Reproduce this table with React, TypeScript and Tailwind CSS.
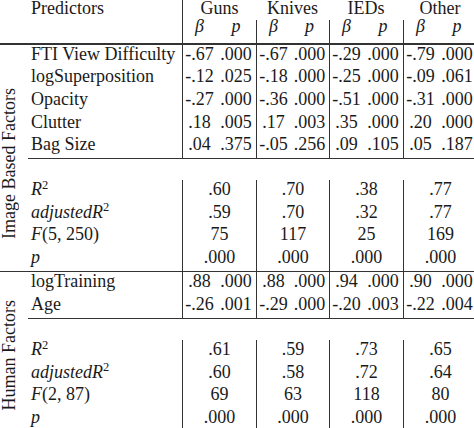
import React from 'react';

type Pair = [string, string];

const LINE = 'bg-[#333]';

function Rule() {
  return <div className={`h-[1.5px] ${LINE}`} />;
}

function DataRow({ label, vals }: { label: React.ReactNode; vals: Pair[] }) {
  return (
    <div className="flex h-[22.7px] leading-[18.4px]">
      <div className="w-[154px] shrink-0 whitespace-nowrap pl-[3px]">{label}</div>
      {vals.map(([b, p], i) => (
        <div key={i} className={`flex shrink-0 border-l-[1.5px] border-[#333] ${i === 1 ? 'w-[73px]' : 'w-[74px]'}`}>
          <span className="w-[33px] text-center whitespace-nowrap">{b}</span>
          <span className="flex-1 text-center whitespace-nowrap">{p}</span>
        </div>
      ))}
    </div>
  );
}

function StatRow({ label, vals }: { label: React.ReactNode; vals: string[] }) {
  return (
    <div className="flex h-[22.7px] leading-[18.4px]">
      <div className="w-[154px] shrink-0 whitespace-nowrap pl-[3px]">{label}</div>
      {vals.map((v, i) => (
        <div key={i} className={`shrink-0 border-l-[1.5px] border-[#333] text-center ${i === 1 ? 'w-[73px]' : 'w-[74px]'}`}>
          {v}
        </div>
      ))}
    </div>
  );
}

function SideLabel({ text, top }: { text: string; top: string }) {
  return (
    <div className={`flex w-[28px] shrink-0 items-start ${top}`}>
      <span className="[writing-mode:vertical-rl] rotate-180 whitespace-nowrap leading-[18px]">{text}</span>
    </div>
  );
}

const R2 = (
  <>
    <i>R</i>
    <sup className="text-[12.5px]">2</sup>
  </>
);
const AdjR2 = (
  <>
    <i>adjustedR</i>
    <sup className="text-[12.5px]">2</sup>
  </>
);

export default function App() {
  const groups = ['Guns', 'Knives', 'IEDs', 'Other'];

  return (
    <div className="h-[428px] w-[474px] overflow-hidden bg-white font-['Liberation_Serif',serif] text-[18px] text-[#1a1a1a]">
      {/* header */}
      <div className="flex h-[20px] leading-[16px]">
        <div className="w-[28px] shrink-0" />
        <div className="w-[154px] shrink-0 pl-[3px]">Predictors</div>
        {groups.map((g, i) => (
          <div
            key={g}
            className={`shrink-0 text-center ${i === 0 ? 'border-l-[1.5px] border-[#333]' : ''} ${i === 1 ? 'w-[73px]' : 'w-[74px]'}`}
          >
            {g}
          </div>
        ))}
      </div>
      <div className="flex h-[23px] leading-[12px]">
        <div className="w-[28px] shrink-0" />
        <div className="w-[154px] shrink-0" />
        {groups.map((g, i) => (
          <div key={g} className={`flex shrink-0 border-l-[1.5px] border-[#333] ${i === 1 ? 'w-[73px]' : 'w-[74px]'}`}>
            <i className="w-[33px] text-center">β</i>
            <i className="flex-1 text-center">p</i>
          </div>
        ))}
      </div>
      <Rule />

      {/* image based factors */}
      <div className="flex">
        <SideLabel text="Image Based Factors" top="pt-[43px]" />
        <div className="flex flex-col">
          <DataRow label="FTI View Difficulty" vals={[['-.67', '.000'], ['-.67', '.000'], ['-.29', '.000'], ['-.79', '.000']]} />
          <DataRow label="logSuperposition" vals={[['-.12', '.025'], ['-.18', '.000'], ['-.25', '.000'], ['-.09', '.061']]} />
          <DataRow label="Opacity" vals={[['-.27', '.000'], ['-.36', '.000'], ['-.51', '.000'], ['-.31', '.000']]} />
          <DataRow label="Clutter" vals={[['.18', '.005'], ['.17', '.003'], ['.35', '.000'], ['.20', '.000']]} />
          <DataRow label="Bag Size" vals={[['.04', '.375'], ['-.05', '.256'], ['.09', '.105'], ['.05', '.187']]} />
          <Rule />
          <div className="h-[20.5px]" />
          <StatRow label={R2} vals={['.60', '.70', '.38', '.77']} />
          <StatRow label={AdjR2} vals={['.59', '.70', '.32', '.77']} />
          <StatRow
            label={
              <>
                <i>F</i>(5, 250)
              </>
            }
            vals={['75', '117', '25', '169']}
          />
          <StatRow label={<i>p</i>} vals={['.000', '.000', '.000', '.000']} />
        </div>
      </div>
      <Rule />

      {/* human factors */}
      <div className="flex">
        <SideLabel text="Human Factors" top="pt-[28px]" />
        <div className="flex flex-col">
          <DataRow label="logTraining" vals={[['.88', '.000'], ['.88', '.000'], ['.94', '.000'], ['.90', '.000']]} />
          <DataRow label="Age" vals={[['-.26', '.001'], ['-.29', '.000'], ['-.20', '.003'], ['-.22', '.004']]} />
          <Rule />
          <div className="h-[20.8px]" />
          <StatRow label={R2} vals={['.61', '.59', '.73', '.65']} />
          <StatRow label={AdjR2} vals={['.60', '.58', '.72', '.64']} />
          <StatRow
            label={
              <>
                <i>F</i>(2, 87)
              </>
            }
            vals={['69', '63', '118', '80']}
          />
          <StatRow label={<i>p</i>} vals={['.000', '.000', '.000', '.000']} />
        </div>
      </div>
    </div>
  );
}
